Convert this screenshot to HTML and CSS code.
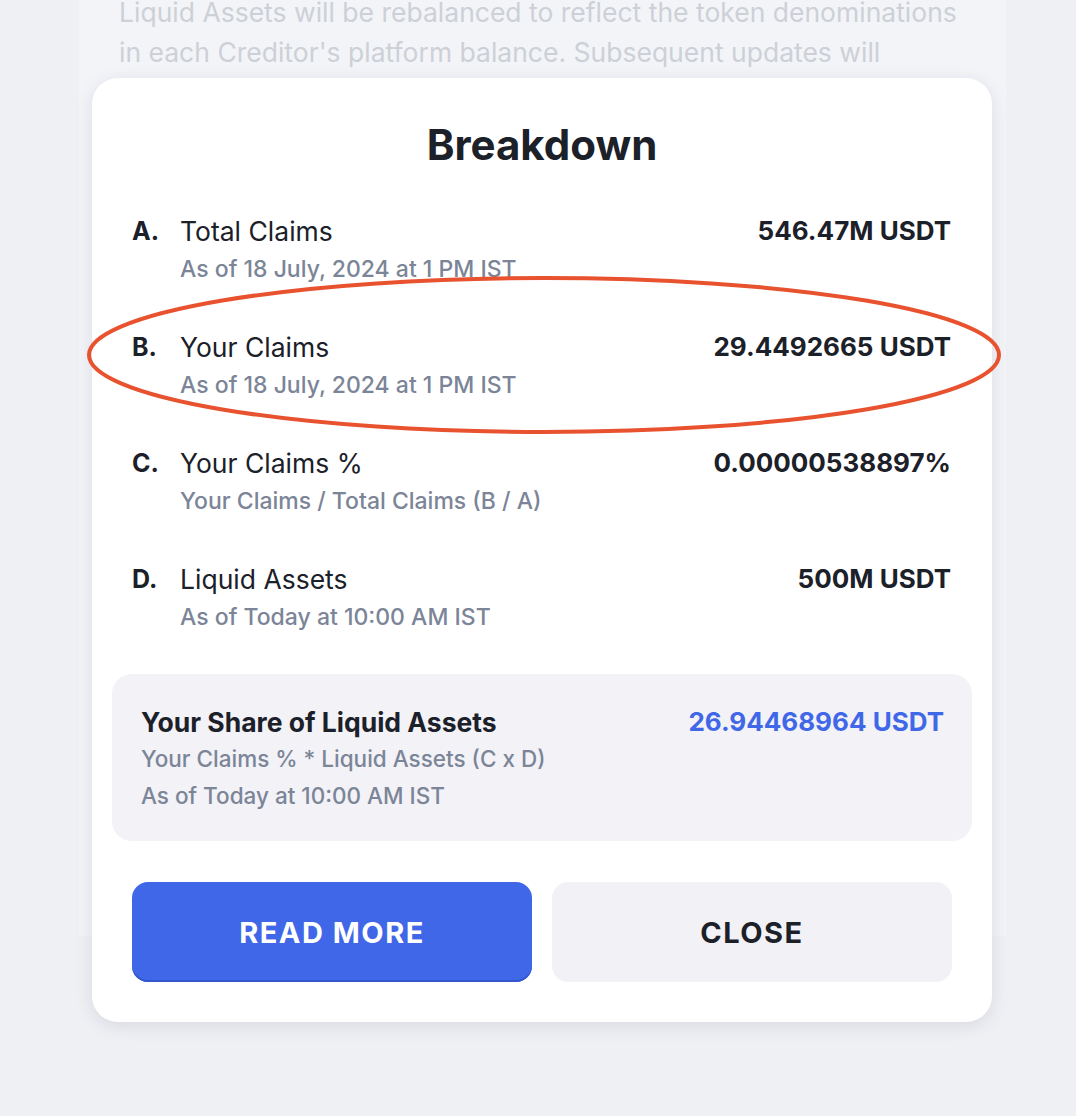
FILE: index.html
```html
<!DOCTYPE html>
<html lang="en">
<head>
<meta charset="utf-8">
<title>Breakdown</title>
<link rel="stylesheet" href="styles.css">
</head>
<body>
<div class="page">
  <div class="back-card">
    <p class="back-text">Liquid Assets will be rebalanced to reflect the token denominations in each Creditor's platform balance. Subsequent updates will continue to be provided to all creditors.</p>
  </div>
  <div class="modal">
    <h1 class="title">Breakdown</h1>
    <div class="rows">
      <div class="row">
        <span class="letter">A.</span>
        <div class="info">
          <div class="label">Total Claims</div>
          <div class="sub">As of 18 July, 2024 at 1 PM IST</div>
        </div>
        <span class="value">546.47M USDT</span>
      </div>
      <div class="row">
        <span class="letter">B.</span>
        <div class="info">
          <div class="label">Your Claims</div>
          <div class="sub">As of 18 July, 2024 at 1 PM IST</div>
        </div>
        <span class="value">29.4492665 USDT</span>
      </div>
      <div class="row">
        <span class="letter">C.</span>
        <div class="info">
          <div class="label">Your Claims %</div>
          <div class="sub">Your Claims / Total Claims (B / A)</div>
        </div>
        <span class="value">0.00000538897%</span>
      </div>
      <div class="row">
        <span class="letter">D.</span>
        <div class="info">
          <div class="label">Liquid Assets</div>
          <div class="sub">As of Today at 10:00 AM IST</div>
        </div>
        <span class="value">500M USDT</span>
      </div>
    </div>
    <div class="share">
      <div class="share-info">
        <div class="share-title">Your Share of Liquid Assets</div>
        <div class="share-sub">Your Claims % * Liquid Assets (C x D)</div>
        <div class="share-sub">As of Today at 10:00 AM IST</div>
      </div>
      <div class="share-value">26.94468964 USDT</div>
    </div>
    <div class="buttons">
      <button class="btn btn-primary">READ MORE</button>
      <button class="btn btn-secondary">CLOSE</button>
    </div>
    <svg class="highlight" width="916" height="162" viewBox="0 0 916 162">
      <ellipse cx="458" cy="81" rx="455" ry="77" fill="none" stroke="#e8522f" stroke-width="4"/>
    </svg>
  </div>
</div>
</body>
</html>
```

FILE: styles.css
```css
* { box-sizing: border-box; }
html, body {
  margin: 0;
  padding: 0;
}
body {
  background: #eff0f4;
  font-family: Inter, "Noto Sans", sans-serif;
  color: #1b2029;
  width: 1076px;
  height: 1116px;
  overflow: hidden;
}
.page {
  position: relative;
  width: 1076px;
  height: 1116px;
}
.back-card {
  margin-left: 79px;
  width: 927px;
  height: 936px;
  background: #f3f4f8;
  padding: 0 40px;
}
.back-text {
  margin: 0;
  position: relative;
  top: -7px;
  font-size: 26.5px;
  line-height: 39.5px;
  color: #cdd0d7;
}
.modal {
  position: absolute;
  left: 92px;
  top: 78px;
  width: 900px;
  height: 944px;
  background: #ffffff;
  border-radius: 26px;
  box-shadow: 0 4px 18px rgba(20, 30, 60, 0.10);
  padding: 40px 20px 40px 20px;
}
.title {
  margin: 0;
  text-align: center;
  font-size: 42px;
  font-weight: 700;
  line-height: 54px;
  color: #1b2029;
}
.rows {
  margin-top: 41px;
  padding: 0 21px 0 20px;
  display: flex;
  flex-direction: column;
}
.row {
  display: flex;
  align-items: flex-start;
  height: 116px;
}
.letter {
  width: 48px;
  font-size: 25px;
  font-weight: 700;
  line-height: 36px;
}
.info {
  flex: 1;
}
.label {
  font-size: 26.5px;
  line-height: 36px;
  font-weight: 400;
}
.sub {
  margin-top: 2px;
  font-size: 23px;
  line-height: 36px;
  font-weight: 500;
  color: #7b8597;
}
.value {
  font-size: 26px;
  font-weight: 700;
  line-height: 36px;
}
.share {
  margin-top: -3px;
  background: #f2f2f7;
  border-radius: 20px;
  padding: 30px 28px 26px 29px;
  display: flex;
  justify-content: space-between;
  align-items: flex-start;
  height: 167px;
}
.share-title {
  font-size: 26.5px;
  font-weight: 700;
  line-height: 36px;
}
.share-sub {
  font-size: 22.5px;
  line-height: 37px;
  font-weight: 500;
  color: #7b8597;
}
.share-value {
  font-size: 26px;
  font-weight: 700;
  line-height: 36px;
  color: #3f67e8;
}
.buttons {
  margin-top: 41px;
  padding: 0 20px;
  display: flex;
  gap: 20px;
}
.btn {
  flex: 1;
  height: 100px;
  border: none;
  border-radius: 16px;
  font-family: Inter, "Noto Sans", sans-serif;
  font-size: 29px;
  font-weight: 700;
  letter-spacing: 1.5px;
}
.btn-primary {
  background: #3f67e8;
  color: #ffffff;
  box-shadow: inset 0 -2px 0 #3256cc;
}
.btn-secondary {
  background: #f2f2f6;
  color: #1b2029;
}
.highlight {
  position: absolute;
  left: -6px;
  top: 196px;
  pointer-events: none;
}
```
